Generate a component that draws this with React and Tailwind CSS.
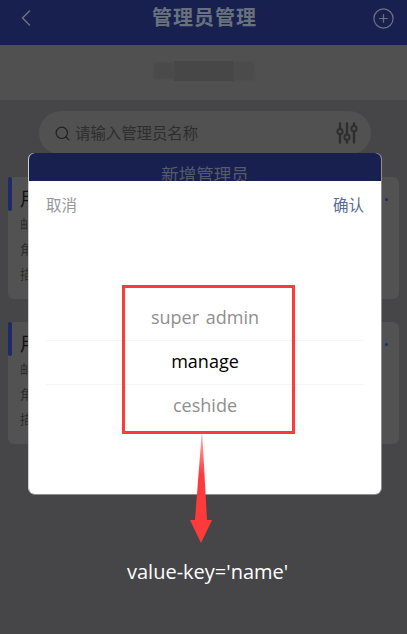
import React from "react";
import { ChevronLeft, CirclePlus, Search } from "lucide-react";

const FONT = { fontFamily: '"Noto Sans CJK SC", "Open Sans", sans-serif' };

const FilterIcon = () => (
  <svg width="22" height="22" viewBox="0 0 22 22" fill="none" stroke="#2e2e2e" strokeWidth="2.4" strokeLinecap="round">
    <path d="M4 1.500V6.500M4 13V20.500M11 1.500V12M11 18.500V20.500M18 1.500V3.500M18 10V20.500" />
    <circle cx="4" cy="9.700" r="2.600" strokeWidth="2" />
    <circle cx="11" cy="15.200" r="2.600" strokeWidth="2" />
    <circle cx="18" cy="6.700" r="2.600" strokeWidth="2" />
  </svg>
);

// only the first character of each line shows beside the modal
const AdminCard = () => (
  <div className="relative h-[122px] rounded-md bg-[#525252] pl-[12px]">
    <div className="absolute left-0 top-0 h-[34px] w-1 rounded-sm bg-[#1f2a68]" />
    <div className="pt-[8px] text-[19px] leading-[26px] text-[#111]">用</div>
    <div className="text-[13px] leading-[25px] text-[#2c2c2c]">邮</div>
    <div className="text-[13px] leading-[25px] text-[#2c2c2c]">角</div>
    <div className="text-[13px] leading-[25px] text-[#2c2c2c]">描</div>
    <div className="absolute right-[11px] top-[21px] flex gap-[3px]">
      <span className="h-[3px] w-[3px] rounded-full bg-[#1f2a68]" />
      <span className="h-[3px] w-[3px] rounded-full bg-[#1f2a68]" />
      <span className="h-[3px] w-[3px] rounded-full bg-[#1f2a68]" />
    </div>
  </div>
);

const PickerRow = ({ children, active }) => (
  <div
    className={`flex h-[43px] items-center justify-center pb-[2px] text-[18px] [word-spacing:2px] ${active ? "text-black" : "text-[#8f8f8f]"}`}
    style={{ fontFamily: '"Open Sans", sans-serif' }}
  >
    {children}
  </div>
);

export default function App() {
  return (
    <div className="relative h-[634px] w-[407px] overflow-hidden bg-[#464648]" style={FONT}>
      <header className="flex h-[45px] items-center justify-between bg-[#182050] pl-[12px] pr-[12px] pb-[9px]">
        <ChevronLeft size={28} strokeWidth={1.3} className="text-[#68727f]" />
        <div className="ml-[-3px] mt-[-2px] text-[20px] font-bold tracking-[1px] text-[#68727f]">管理员管理</div>
        <CirclePlus size={23} strokeWidth={1.3} className="text-[#68727f]" />
      </header>

      {/* blurred out name */}
      <div className="flex h-[55px] items-center justify-center bg-[#505050]">
        <div className="mt-[-4px] flex h-[20px] items-center">
          <div className="h-[16px] w-[20px] bg-[#4a4a4a] blur-[1px]" />
          <div className="h-[20px] w-[60px] bg-[#474747]" />
          <div className="h-[18px] w-[20px] bg-[#4b4b4b] blur-[1px]" />
        </div>
      </div>

      <div className="ml-[39px] mt-[11px] flex h-[44px] w-[332px] items-center rounded-full bg-[#515151] pl-[15px] pr-[13px]">
        <Search size={17} strokeWidth={1.6} className="text-[#1e1e1e]" />
        <span className="ml-[4px] flex-1 text-[15.4px] text-[#2e2e2e]">请输入管理员名称</span>
        <FilterIcon />
      </div>

      <div className="mt-[22px] flex flex-col gap-[23px] px-[8px]">
        <AdminCard />
        <AdminCard />
      </div>

      {/* modal sits over the page */}
      <div className="absolute left-[29px] top-[153px] h-[341px] w-[352px] overflow-hidden rounded-md bg-white shadow-[0_1px_0_#8f8f8f,1px_0_0_#8f8f8f,-1px_0_0_#cfcfcf]">
        <div className="h-[28px] overflow-hidden bg-[#182050] pt-[9px] text-center text-[17.500px] leading-[24px] text-[#555b68]">
          新增管理员
        </div>
        <div className="flex h-[48px] items-center justify-between px-[17px] text-[15.500px]">
          <span className="text-[#969799]">取消</span>
          <span className="text-[#576b95]">确认</span>
        </div>
        <div className="mx-[17px] mt-[68px]">
          <div className="border-b border-[#f5f5f5]">
            <PickerRow>super admin</PickerRow>
          </div>
          <div className="border-b border-[#f5f5f5]">
            <PickerRow active>manage</PickerRow>
          </div>
          <PickerRow>ceshide</PickerRow>
        </div>
      </div>

      {/* red annotation drawn on top of the screenshot */}
      <div className="absolute left-[122px] top-[285px] h-[149px] w-[173px] border-[3px] border-[#fe3a3a]" />
      <svg className="absolute left-[188px] top-[428px]" width="28" height="118" viewBox="0 0 28 118">
        <defs>
          <linearGradient id="arrowFade" x1="0" y1="0" x2="0" y2="1">
            <stop offset="0" stopColor="#fe3a3a" stopOpacity="0.3" />
            <stop offset="0.4" stopColor="#fe3a3a" />
          </linearGradient>
        </defs>
        <path d="M14 1 L19 92 L24 92 L13 115 L2 92 L7 92 Z" fill="url(#arrowFade)" />
      </svg>
      <div
        className="absolute left-[127px] top-[558px] text-[20px] leading-[28px] text-white"
        style={{ fontFamily: '"Open Sans", sans-serif' }}
      >
        value-key='name'
      </div>
    </div>
  );
}
